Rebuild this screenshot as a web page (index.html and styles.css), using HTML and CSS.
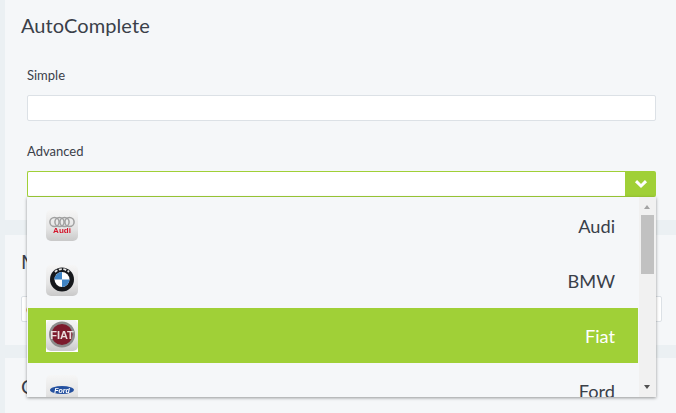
FILE: index.html
```html
<!DOCTYPE html>
<html lang="en">
<head>
<meta charset="utf-8">
<title>AutoComplete</title>
<link rel="stylesheet" href="styles.css">
</head>
<body>
<svg class="defs" width="0" height="0" aria-hidden="true">
  <defs>
    <linearGradient id="gloss" x1="0" y1="0" x2="0" y2="1">
      <stop offset="0" stop-color="#f6f6f6"/>
      <stop offset="0.6" stop-color="#e4e4e4"/>
      <stop offset="1" stop-color="#c9c9c9"/>
    </linearGradient>
  </defs>
</svg>
<main class="page">
  <section class="card card-first">
    <h2 class="title">AutoComplete</h2>
    <label class="label">Simple</label>
    <input class="input" type="text">
    <label class="label label-adv">Advanced</label>
    <div class="combo">
      <input class="input input-focus" type="text">
      <span class="combo-btn">
        <svg width="14" height="10" viewBox="0 0 14 10"><path d="M2 2.2 7 7l5-4.800" fill="none" stroke="#fff" stroke-width="3"/></svg>
      </span>
      <div class="panel">
        <ul class="list">
          <li class="item">
            <svg class="logo" viewBox="0 0 32 32"><rect width="32" height="31" rx="5" fill="url(#gloss)"/><g fill="none" stroke="#a0a0a0" stroke-width="1.500"><circle cx="8.500" cy="12" r="4.600"/><circle cx="13.500" cy="12" r="4.600"/><circle cx="18.500" cy="12" r="4.600"/><circle cx="23.500" cy="12" r="4.600"/></g><text x="16" y="23" class="logo-audi">Audi</text></svg>
            <span>Audi</span>
          </li>
          <li class="item">
            <svg class="logo" viewBox="0 0 32 32"><rect width="32" height="31" rx="5" fill="url(#gloss)"/><circle cx="16" cy="14.500" r="12" fill="#15181c"/><path d="M9 7a10 10 0 0 1 14 0" fill="none" stroke="#e8e8e8" stroke-width="1.800" stroke-dasharray="3 1.500"/><circle cx="16" cy="14.500" r="7.500" fill="#fff"/><path d="M16 14.500V7a7.500 7.500 0 0 0-7.500 7.500ZM16 14.500V22a7.500 7.500 0 0 0 7.500-7.500Z" fill="#3f84c4"/></svg>
            <span>BMW</span>
          </li>
          <li class="item item-active">
            <svg class="logo" viewBox="0 0 32 32"><rect width="32" height="32" fill="#fff"/><rect width="32" height="31" rx="5" fill="url(#gloss)"/><circle cx="16" cy="14.500" r="13" fill="#8c8c8c"/><circle cx="16" cy="14.500" r="10.500" fill="#7c1a2c"/><text x="16" y="18.500" class="logo-fiat">FIAT</text></svg>
            <span>Fiat</span>
          </li>
          <li class="item">
            <svg class="logo" viewBox="0 0 32 32"><rect width="32" height="32" rx="5" fill="url(#gloss)"/><ellipse cx="16" cy="15" rx="12" ry="4" fill="#24509f"/><text x="16" y="17.500" class="logo-ford">Ford</text></svg>
            <span>Ford</span>
          </li>
        </ul>
        <div class="scrollbar">
          <span class="arrow arrow-up"></span>
          <span class="thumb"></span>
          <span class="arrow arrow-down"></span>
        </div>
      </div>
    </div>
  </section>
  <section class="card card-second">
    <h2 class="title">Multiple</h2>
    <input class="input input-wide" type="text" value="Option">
  </section>
  <section class="card card-third">
    <h2 class="title">Custom</h2>
  </section>
</main>
</body>
</html>
```
FILE: styles.css
```css
* { box-sizing: border-box; }
html, body { margin: 0; height: 100%; }
body {
  background: #ebf0f3;
  font-family: Lato, "Open Sans", sans-serif;
  color: #3a4049;
  overflow: hidden;
}
.defs { position: absolute; }
.page { padding-left: 5px; display: flex; flex-direction: column; gap: 14px; }
.card { background: #f5f7f9; padding: 13px 14px 13px 16px; }
.card-first { height: 220px; }
.card-second { height: 110px; margin-top: 1px; }
.card-third { height: 80px; margin-top: -1px; padding-top: 16px; }
.title { margin: 0; font-size: 20px; line-height: 24px; font-weight: 400; letter-spacing: .08px; color: #3a4049; }
.label { display: block; margin: 30px 0 0 6px; font-size: 13px; line-height: 16px; color: #3a4049; }
.label-adv { margin-top: 22px; }
.input {
  display: block;
  height: 26px;
  width: 100%;
  background: #fff;
  border: 1px solid #dce1e6;
  border-radius: 2px;
  outline: 0;
  padding: 0 4px;
  font: 14px Lato, sans-serif;
  color: #3a4049;
}
.card-first > .input { margin: 12px 0 0 6px; width: 629px; }
.combo { position: relative; margin: 12px 0 0 6px; width: 629px; display: flex; }
.input-focus { flex: 1; border-color: #a0d037; border-right: 0; border-radius: 2px 0 0 2px; }
.combo-btn {
  width: 31px; height: 26px;
  background: #a0d037;
  border-radius: 0 2px 2px 0;
  display: flex; align-items: center; justify-content: center;
}
.panel {
  position: absolute;
  left: 0; top: 26px;
  width: 629px; height: 200px;
  display: flex;
  background: #f5f7f9;
  box-shadow: 0 1px 3px rgba(0, 0, 0, .4);
  overflow: hidden;
  z-index: 2;
}
.list { list-style: none; margin: 0 1px 0 0; padding: 1px 0 0 1px; flex: 1; min-width: 0; }
.item {
  height: 55px;
  display: flex;
  align-items: center;
  justify-content: space-between;
  padding: 0 23px 0 18px;
  font-size: 18.200px;
  color: #3a4049;
}
.item-active { background: #a0d037; color: #fff; }
.logo { width: 32px; height: 32px; display: block; filter: blur(.4px); }
.logo-audi { font: 700 8px "Liberation Sans", sans-serif; fill: #d4142a; text-anchor: middle; }
.logo-fiat { font: 700 11px "Liberation Sans", sans-serif; fill: #e9dcdc; text-anchor: middle; }
.logo-ford { font: italic 700 7px "Liberation Sans", sans-serif; fill: #fff; text-anchor: middle; }
.scrollbar { width: 17px; background: #f1f1f1; position: relative; }
.thumb { position: absolute; top: 18px; left: 2px; width: 13px; height: 59px; background: #c1c1c1; }
.arrow { position: absolute; left: 4.500px; width: 0; height: 0; border-left: 3.500px solid transparent; border-right: 3.500px solid transparent; }
.arrow-up { top: 8px; border-bottom: 4px solid #a3a3a3; }
.arrow-down { bottom: 8px; border-top: 4px solid #505050; }
.card-second .title { margin-top: 1px; }
.input-wide { margin-top: 23px; }
```
